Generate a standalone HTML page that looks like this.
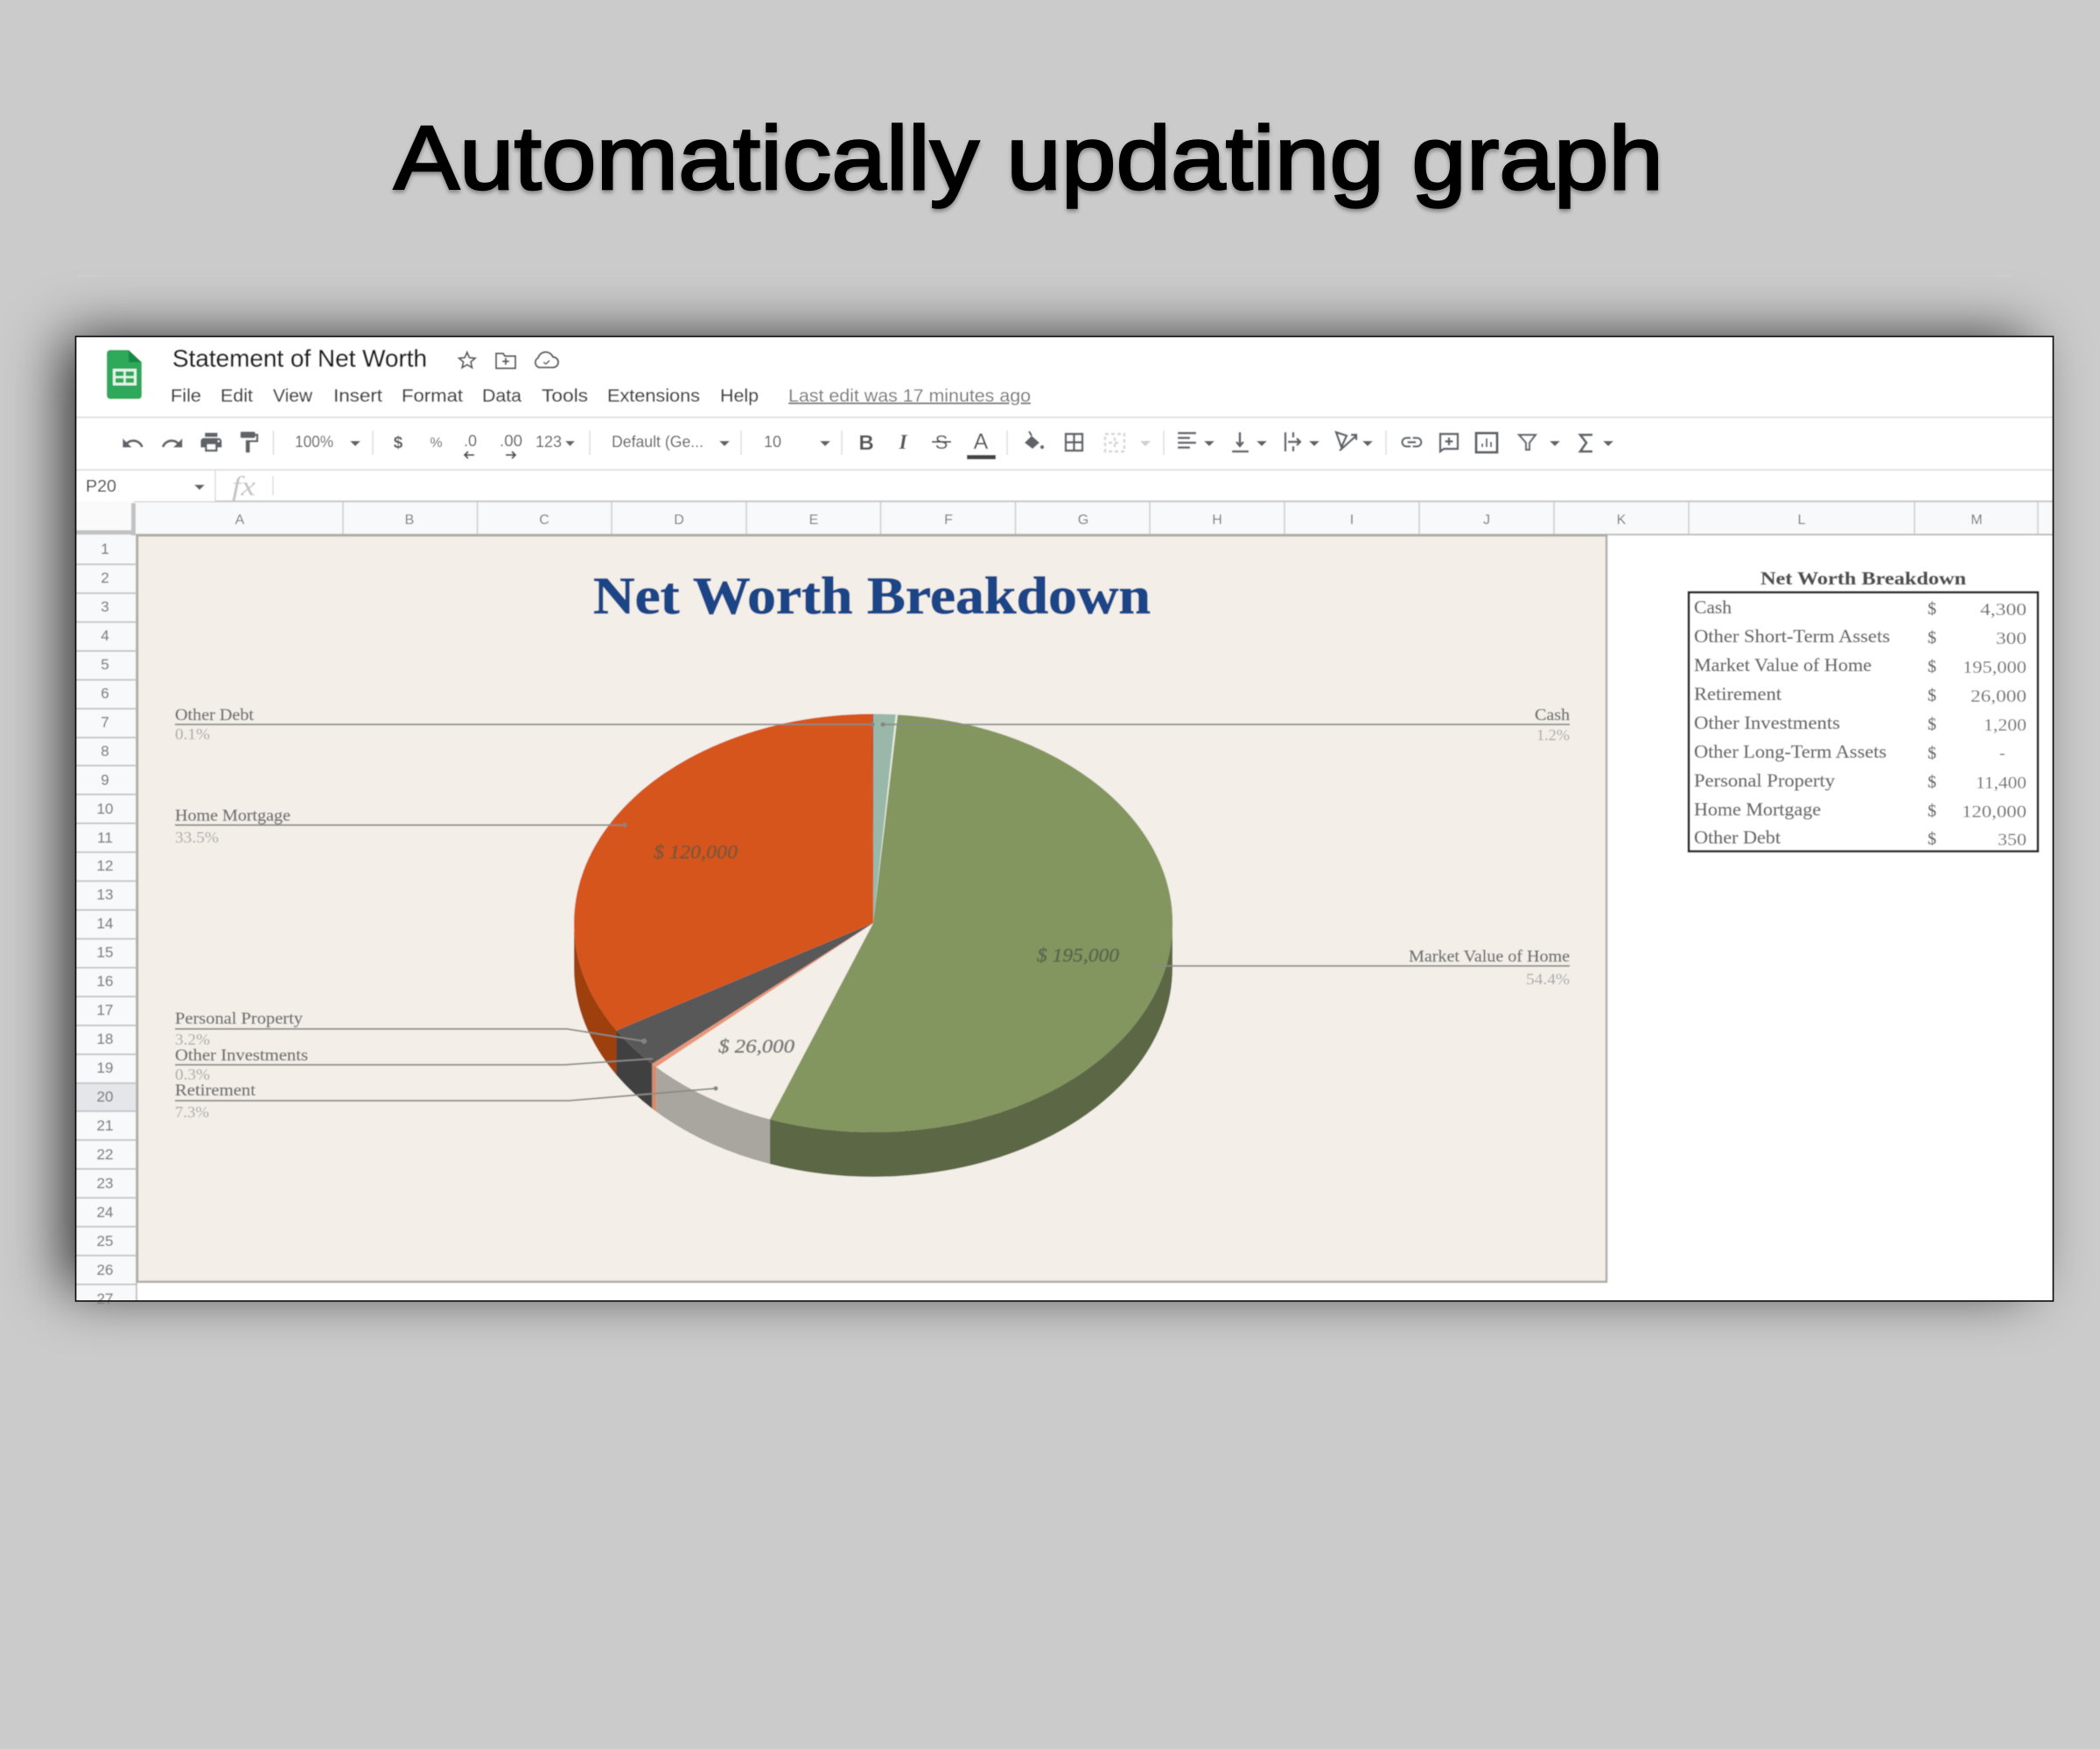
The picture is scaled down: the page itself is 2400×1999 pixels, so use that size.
<!DOCTYPE html>
<html lang="en">
<head>
<meta charset="utf-8">
<title>Automatically updating graph</title>
<style>
html,body{margin:0;padding:0;background:#cbcbcb;}
body{width:2400px;height:1999px;position:relative;overflow:hidden;}
#faint{position:absolute;left:86px;top:315px;width:2215px;height:1px;background:#d0d0d0;}
#shadow{position:absolute;left:74px;top:386px;width:2242px;height:1087px;background:rgba(0,0,0,.78);filter:blur(33px);}
svg{position:absolute;left:0;top:0;}
.sans{font-family:"Liberation Sans",sans-serif;}
.serif{font-family:"Liberation Serif",serif;}
</style>
</head>
<body>
<div id="faint"></div>
<div id="shadow"></div>
<svg width="2400" height="1999" viewBox="0 0 2400 1999" xmlns="http://www.w3.org/2000/svg">
<defs>
<filter id="ts" x="-5%" y="-20%" width="110%" height="150%"><feDropShadow dx="0" dy="3" stdDeviation="2.500" flood-color="#000" flood-opacity=".35"/></filter>
<filter id="soft" x="0" y="0" width="100%" height="100%"><feGaussianBlur stdDeviation=".65"/></filter>
</defs>

<text class="sans" x="450" y="216" font-size="103" fill="#050505" stroke="#050505" stroke-width="2.400" textLength="1451" lengthAdjust="spacingAndGlyphs" filter="url(#ts)">Automatically updating graph</text>

<g filter="url(#soft)">
<rect x="87" y="385" width="2259" height="1102" fill="#fff"/>

<!-- chrome lines -->
<rect x="87" y="476" width="2259" height="2" fill="#e2e2e2"/>
<rect x="87" y="536" width="2259" height="2" fill="#e2e2e2"/>
<rect x="87" y="573" width="2259" height="39" fill="#f8f9fa"/>
<rect x="87" y="572" width="2259" height="2" fill="#c6c6c6"/>
<rect x="87" y="538" width="159" height="35" fill="#fff"/>
<rect x="87" y="573" width="66" height="34" fill="#fafafa"/>

<!-- sheets logo -->
<path d="M122 404a4 4 0 0 1 4-4h21l15 14v38a4 4 0 0 1-4 4h-32a4 4 0 0 1-4-4z" fill="#2fa85a"/>
<path d="M147 400l15 14h-15z" fill="#178a43"/>
<path d="M130.500 423h24v16h-24z" fill="none" stroke="#e6f5ea" stroke-width="3"/>
<path d="M142.500 423v16M130.500 431h24" stroke="#e6f5ea" stroke-width="2.500"/>

<!-- doc title -->
<text class="sans" x="197" y="419" font-size="28" fill="#1d1d1d" stroke="#1d1d1d" stroke-width=".3" textLength="291" lengthAdjust="spacingAndGlyphs">Statement of Net Worth</text>
<path transform="translate(520,398) scale(1.15)" fill="#555" d="M22 9.24l-7.19-.62L12 2 9.19 8.630 2 9.240l5.460 4.730L5.820 21 12 17.270 18.180 21l-1.630-7.030L22 9.240zM12 15.400l-3.760 2.270 1-4.280-3.320-2.880 4.380-.38L12 6.100l1.710 4.040 4.380.38-3.320 2.880 1 4.280L12 15.400z"/>
<path d="M567 404h8l2 3h12v14h-22z" fill="none" stroke="#555" stroke-width="2"/>
<path d="M578 409v8M574 413h8" stroke="#555" stroke-width="2"/>
<path d="M619 420h-3a6 6 0 0 1-1-11 9 9 0 0 1 17-1 6 6 0 0 1 0 12h-13z" fill="none" stroke="#555" stroke-width="2"/>
<path d="M621 414l3 2 4-4" fill="none" stroke="#555" stroke-width="1.600"/>

<!-- menu -->
<g class="sans" font-size="20" fill="#3f3f3f" stroke="#3f3f3f" stroke-width=".2">
<text x="195" y="459" textLength="35" lengthAdjust="spacingAndGlyphs">File</text>
<text x="252" y="459" textLength="37" lengthAdjust="spacingAndGlyphs">Edit</text>
<text x="312" y="459" textLength="45" lengthAdjust="spacingAndGlyphs">View</text>
<text x="381" y="459" textLength="56" lengthAdjust="spacingAndGlyphs">Insert</text>
<text x="459" y="459" textLength="70" lengthAdjust="spacingAndGlyphs">Format</text>
<text x="551" y="459" textLength="45" lengthAdjust="spacingAndGlyphs">Data</text>
<text x="619" y="459" textLength="53" lengthAdjust="spacingAndGlyphs">Tools</text>
<text x="694" y="459" textLength="106" lengthAdjust="spacingAndGlyphs">Extensions</text>
<text x="823" y="459" textLength="44" lengthAdjust="spacingAndGlyphs">Help</text>
</g>
<text class="sans" x="901" y="459" font-size="20" fill="#777" text-decoration="underline" textLength="277" lengthAdjust="spacingAndGlyphs">Last edit was 17 minutes ago</text>

<!-- toolbar separators -->
<path d="M312.500 492v28M426 492v28M674 492v28M847 492v28M962 492v28M1151 492v28M1330 492v28M1584 492v28" stroke="#ddd" stroke-width="1.500"/>

<!-- toolbar icons -->
<g fill="#5f6368">
<path transform="translate(138,493) scale(1.150)" d="M12.500 8c-2.650 0-5.050.99-6.900 2.600L2 7v9h9l-3.620-3.620c1.390-1.160 3.160-1.880 5.120-1.880 3.540 0 6.550 2.310 7.600 5.500l2.370-.78C21.080 11.030 17.150 8 12.500 8z"/>
<path transform="translate(183,493) scale(1.150)" d="M18.400 10.600C16.550 8.990 14.150 8 11.500 8c-4.650 0-8.580 3.030-9.960 7.220L3.900 16c1.050-3.190 4.050-5.500 7.600-5.500 1.950 0 3.730.72 5.120 1.880L13 16h9V7l-3.600 3.600z"/>
<path transform="translate(227,491) scale(1.200)" d="M19 8H5c-1.660 0-3 1.340-3 3v6h4v4h12v-4h4v-6c0-1.660-1.340-3-3-3zm-3 11H8v-5h8v5zm3-7c-.55 0-1-.45-1-1s.45-1 1-1 1 .45 1 1-.45 1-1 1zm-1-9H6v4h12V3z"/>
<path transform="translate(270,491) scale(1.200)" d="M18 4V3c0-.55-.45-1-1-1H5c-.55 0-1 .45-1 1v4c0 .55.45 1 1 1h12c.55 0 1-.45 1-1V6h1v4H9v11c0 .55.45 1 1 1h2c.55 0 1-.45 1-1v-9h8V4h-3z"/>
<!-- dropdown triangles -->
<path d="M400 504h12l-6 6zM646 504h11l-5.500 6zM822 504h12l-6 6zM937 504h12l-6 6zM1376 504h12l-6 6zM1436 504h12l-6 6zM1496 504h12l-6 6zM1557 504h12l-6 6zM1771 504h12l-6 6zM1832 504h12l-6 6zM222 554h12l-6 6z"/>
<path d="M1303 504h12l-6 6z" fill="#cfcfcf"/>
<!-- fill -->
<path d="M1179 498l9 8-8 7-9-7z" />
<path d="M1176 493l3 5" stroke="#5f6368" stroke-width="2.200"/>
<circle cx="1191" cy="511" r="2.200"/>
<!-- text colour bar -->
<rect x="1105" y="520" width="33" height="5" fill="#444"/>
<!-- link -->
<path transform="translate(1599,491) scale(1.200)" d="M3.900 12c0-1.710 1.390-3.100 3.100-3.100h4V7H7c-2.760 0-5 2.240-5 5s2.240 5 5 5h4v-1.900H7c-1.710 0-3.100-1.390-3.100-3.100zM8 13h8v-2H8v2zm9-6h-4v1.900h4c1.710 0 3.100 1.390 3.100 3.100s-1.390 3.100-3.100 3.100h-4V17h4c2.760 0 5-2.240 5-5s-2.240-5-5-5z"/>
</g>
<g fill="none" stroke="#5f6368" stroke-width="2.400">
<path d="M1218 496h19v19h-19zM1227.500 496v19M1218 505.500h19"/>
<path d="M1263 496h22v20h-22zM1274 500v12M1267 506h14" stroke="#d6d6d6" stroke-dasharray="4 3"/>
<path d="M1346 495h21M1346 500.500h14M1346 506h21M1346 511.500h14" stroke-width="2.600"/>
<path d="M1417 494v15" stroke-width="2.600"/>
<path d="M1413 505l4 5 4-5M1408 516h19" stroke-width="2.400"/>
<path d="M1469 494v22M1478 494v6M1478 510v6M1472 505h13M1482 501l4 4-4 4"/>
<path d="M1527 494l12 4-6 13zM1531 515l19-17M1544 497h6v6"/>
<path d="M1646 496h20v17h-16l-4 3zM1656 500v9M1651.500 504.500h9"/>
<path d="M1687 495h24v22h-24z" stroke-width="3"/>
<path d="M1694 511v-4M1699 511v-10M1704 511v-6" stroke-width="2"/>
<path d="M1736 497h19l-7 9v8h-4v-8z" stroke-width="2.200"/>
<path d="M1820 497h-14l7 9-7 10h14" stroke-width="2.800"/>
</g>

<!-- toolbar text -->
<g class="sans" font-size="18" fill="#555">
<text x="337" y="511" textLength="44" lengthAdjust="spacingAndGlyphs">100%</text>
<text x="455" y="512" text-anchor="middle" font-size="19" font-weight="bold">$</text>
<text x="498.500" y="511" text-anchor="middle" font-size="16">%</text>
<text x="530" y="510" textLength="15" lengthAdjust="spacingAndGlyphs">.0</text>
<text x="571" y="510" textLength="26" lengthAdjust="spacingAndGlyphs">.00</text>
<text x="612" y="511" textLength="30" lengthAdjust="spacingAndGlyphs">123</text>
<text x="699" y="511" textLength="105" lengthAdjust="spacingAndGlyphs">Default (Ge...</text>
<text x="873" y="511" textLength="20" lengthAdjust="spacingAndGlyphs">10</text>
<text x="990" y="514" text-anchor="middle" font-size="24" font-weight="bold">B</text>
<text x="1032" y="513" text-anchor="middle" font-size="24" font-style="italic" font-weight="bold" font-family="Liberation Serif,serif">I</text>
<text x="1076" y="513" text-anchor="middle" font-size="22">S</text>
<text x="1121" y="513" text-anchor="middle" font-size="25">A</text>
</g>
<path d="M1065 505h22" stroke="#555" stroke-width="2"/>
<path d="M531 520h11M535 516l-4 4 4 4M578 520h11M585 516l4 4-4 4" fill="none" stroke="#555" stroke-width="2"/>

<!-- name box & fx -->
<text class="sans" x="98" y="562" font-size="19" fill="#333" textLength="35" lengthAdjust="spacingAndGlyphs">P20</text>
<path d="M246 537v36" stroke="#ddd" stroke-width="1.500"/>
<text class="serif" x="265" y="566" font-size="32" font-style="italic" fill="#c4c4c4" textLength="27" lengthAdjust="spacingAndGlyphs">fx</text>
<path d="M312 544v22" stroke="#ddd" stroke-width="1.500"/>

<!-- column header -->
<path d="M392 574v37M545.500 574v37M699 574v37M853 574v37M1006.500 574v37M1160.500 574v37M1314 574v37M1468 574v37M1622 574v37M1776 574v37M1930 574v37M2188 574v37M2329 574v37" stroke="#ccc" stroke-width="1.500"/>
<g class="sans" font-size="16" fill="#777" text-anchor="middle">
<text x="274" y="599">A</text><text x="468" y="599">B</text><text x="622" y="599">C</text><text x="776" y="599">D</text><text x="930" y="599">E</text><text x="1084" y="599">F</text><text x="1238" y="599">G</text><text x="1391" y="599">H</text><text x="1545" y="599">I</text><text x="1699" y="599">J</text><text x="1853" y="599">K</text><text x="2059" y="599">L</text><text x="2259" y="599">M</text>
</g>
<rect x="150" y="575" width="5" height="37" fill="#c2c2c2"/>
<rect x="87" y="606" width="68" height="5" fill="#c2c2c2"/>
<rect x="155" y="610" width="2191" height="2" fill="#bdbdbd"/>

<!-- row gutter -->
<rect x="87" y="612" width="69" height="875" fill="#f7f9fb"/>
<rect x="87" y="1237" width="69" height="33" fill="#e4e6ea"/>
<path d="M87 645h69M87 678h69M87 711h69M87 744h69M87 777h69M87 810h69M87 843h69M87 875h69M87 908h69M87 941h69M87 974h69M87 1007h69M87 1040h69M87 1073h69M87 1106h69M87 1139h69M87 1172h69M87 1205h69M87 1238h69M87 1270h69M87 1303h69M87 1336h69M87 1369h69M87 1402h69M87 1435h69M87 1468h69" stroke="#c8c8c8" stroke-width="2"/>
<rect x="155" y="612" width="2" height="875" fill="#c4c4c4"/>
<g class="sans" font-size="17" fill="#808080" stroke="#808080" stroke-width=".2" text-anchor="middle">
<text x="120" y="633">1</text><text x="120" y="666">2</text><text x="120" y="699">3</text><text x="120" y="732">4</text><text x="120" y="765">5</text><text x="120" y="798">6</text><text x="120" y="831">7</text><text x="120" y="864">8</text><text x="120" y="897">9</text><text x="120" y="930">10</text><text x="120" y="963">11</text><text x="120" y="995">12</text><text x="120" y="1028">13</text><text x="120" y="1061">14</text><text x="120" y="1094">15</text><text x="120" y="1127">16</text><text x="120" y="1160">17</text><text x="120" y="1193">18</text><text x="120" y="1226">19</text><text x="120" y="1259">20</text><text x="120" y="1292">21</text><text x="120" y="1325">22</text><text x="120" y="1358">23</text><text x="120" y="1391">24</text><text x="120" y="1424">25</text><text x="120" y="1457">26</text><text x="120" y="1490">27</text>
</g>

<!-- chart -->
<rect x="157" y="612" width="1679" height="853" fill="#f3eee8"/>
<path d="M157 612h1679v853H157z" fill="none" stroke="#aeaca6" stroke-width="2.400"/>
<text class="serif" x="678" y="701" font-size="60" font-weight="bold" fill="#1c4587" stroke="#1c4587" stroke-width=".8" textLength="637" lengthAdjust="spacingAndGlyphs">Net Worth Breakdown</text>

<!-- pie walls -->
<path d="M1340 1055A342 239 0 0 1 879.900 1279.300V1330.300A342 239 0 0 0 1340 1106Z" fill="#5b6845"/>
<path d="M879.900 1279.300A342 239 0 0 1 749.900 1219.500V1270.500A342 239 0 0 0 879.900 1330.300Z" fill="#a9a69f"/>
<path d="M749.900 1219.500A342 239 0 0 1 745.200 1216V1267A342 239 0 0 0 749.900 1270.500Z" fill="#d88a6c"/>
<path d="M745.200 1216A342 239 0 0 1 704.500 1177.700V1228.700A342 239 0 0 0 745.200 1267Z" fill="#3f3f3f"/>
<path d="M704.500 1177.700A342 239 0 0 1 656 1055V1106A342 239 0 0 0 704.500 1228.700Z" fill="#9e400f"/>
<!-- pie top -->
<path d="M998 1055L1023.600 816.700A342 239 0 1 1 879.900 1279.300Z" fill="#84965f"/>
<path d="M998 1055L879.900 1279.300A342 239 0 0 1 749.900 1219.500Z" fill="#f3eee8"/>
<path d="M998 1055L749.900 1219.500A342 239 0 0 1 745.200 1216Z" fill="#e9977a"/>
<path d="M998 1055L745.200 1216A342 239 0 0 1 704.500 1177.700Z" fill="#595959"/>
<path d="M998 1055L704.500 1177.700A342 239 0 0 1 996.200 816Z" fill="#d5541a"/>
<path d="M998 1055L996.200 816H998Z" fill="#c23a1c"/>
<path d="M998 1055V816A342 239 0 0 1 1023.600 816.700Z" fill="#9ab8a9"/>
<path d="M998 1055L1023.600 816.700L1026 817Z" fill="#e7ece0"/>

<!-- leader lines -->
<g fill="none" stroke="#8a8a86" stroke-width="1.800">
<path d="M200 828H997"/>
<path d="M1009 828H1794"/>
<path d="M200 943H713"/>
<path d="M1794 1104H1318"/>
<path d="M200 1176H648L736 1190"/>
<path d="M200 1217H645L746 1210"/>
<path d="M200 1258H650L818 1244"/>
</g>
<g fill="#85857f">
<circle cx="997" cy="828" r="2.500"/><circle cx="1009" cy="828" r="2.500"/><circle cx="714" cy="943" r="2.500"/><circle cx="736" cy="1190" r="3"/><circle cx="818" cy="1244" r="2.500"/>
</g>

<!-- data labels -->
<g class="serif" font-style="italic" font-size="22" stroke-width=".5">
<text x="747" y="981" fill="#7e5538" stroke="#7e5538" textLength="96" lengthAdjust="spacingAndGlyphs">$ 120,000</text>
<text x="1185" y="1099" fill="#59684f" stroke="#59684f" textLength="94" lengthAdjust="spacingAndGlyphs">$ 195,000</text>
<text x="821" y="1203" fill="#7a7a78" stroke="#7a7a78" textLength="87" lengthAdjust="spacingAndGlyphs">$ 26,000</text>
</g>
<g class="serif" font-size="19" fill="#707070" stroke="#707070" stroke-width=".25">
<text x="200" y="823" textLength="90" lengthAdjust="spacingAndGlyphs">Other Debt</text>
<text x="200" y="938" textLength="132" lengthAdjust="spacingAndGlyphs">Home Mortgage</text>
<text x="200" y="1170" textLength="146" lengthAdjust="spacingAndGlyphs">Personal Property</text>
<text x="200" y="1212" textLength="152" lengthAdjust="spacingAndGlyphs">Other Investments</text>
<text x="200" y="1252" textLength="92" lengthAdjust="spacingAndGlyphs">Retirement</text>
<text x="1754" y="823" textLength="40" lengthAdjust="spacingAndGlyphs">Cash</text>
<text x="1610" y="1099" textLength="184" lengthAdjust="spacingAndGlyphs">Market Value of Home</text>
</g>
<g class="serif" font-size="18" fill="#aaa">
<text x="200" y="845" textLength="40" lengthAdjust="spacingAndGlyphs">0.1%</text>
<text x="200" y="963" textLength="50" lengthAdjust="spacingAndGlyphs">33.5%</text>
<text x="200" y="1194" textLength="40" lengthAdjust="spacingAndGlyphs">3.2%</text>
<text x="200" y="1234" textLength="40" lengthAdjust="spacingAndGlyphs">0.3%</text>
<text x="200" y="1277" textLength="39" lengthAdjust="spacingAndGlyphs">7.3%</text>
<text x="1756" y="846" textLength="38" lengthAdjust="spacingAndGlyphs">1.2%</text>
<text x="1744" y="1125" textLength="50" lengthAdjust="spacingAndGlyphs">54.4%</text>
</g>

<!-- right table -->
<text class="serif" x="2012" y="668" font-size="21" font-weight="bold" fill="#4f4f4f" stroke="#4f4f4f" stroke-width=".3" textLength="235" lengthAdjust="spacingAndGlyphs">Net Worth Breakdown</text>
<rect x="1930" y="677" width="399" height="296" fill="#fff" stroke="#1c1c1c" stroke-width="2.600"/>
<g class="serif" font-size="21" fill="#666" stroke="#666" stroke-width=".25">
<text x="1936" y="701" textLength="43" lengthAdjust="spacingAndGlyphs">Cash</text>
<text x="1936" y="734" textLength="224" lengthAdjust="spacingAndGlyphs">Other Short-Term Assets</text>
<text x="1936" y="767" textLength="203" lengthAdjust="spacingAndGlyphs">Market Value of Home</text>
<text x="1936" y="800" textLength="100" lengthAdjust="spacingAndGlyphs">Retirement</text>
<text x="1936" y="833" textLength="167" lengthAdjust="spacingAndGlyphs">Other Investments</text>
<text x="1936" y="866" textLength="220" lengthAdjust="spacingAndGlyphs">Other Long-Term Assets</text>
<text x="1936" y="899" textLength="161" lengthAdjust="spacingAndGlyphs">Personal Property</text>
<text x="1936" y="932" textLength="145" lengthAdjust="spacingAndGlyphs">Home Mortgage</text>
<text x="1936" y="964" textLength="99" lengthAdjust="spacingAndGlyphs">Other Debt</text>
</g>
<g class="serif" font-size="20" fill="#666" stroke="#666" stroke-width=".25" text-anchor="middle">
<text x="2208" y="702">$</text><text x="2208" y="735">$</text><text x="2208" y="768">$</text><text x="2208" y="801">$</text><text x="2208" y="834">$</text><text x="2208" y="867">$</text><text x="2208" y="900">$</text><text x="2208" y="933">$</text><text x="2208" y="965">$</text>
</g>
<g class="serif" font-size="20" fill="#6e6e6e">
<text x="2263" y="703" textLength="53" lengthAdjust="spacingAndGlyphs">4,300</text>
<text x="2281" y="736" textLength="35" lengthAdjust="spacingAndGlyphs">300</text>
<text x="2243" y="769" textLength="73" lengthAdjust="spacingAndGlyphs">195,000</text>
<text x="2252" y="802" textLength="64" lengthAdjust="spacingAndGlyphs">26,000</text>
<text x="2267" y="835" textLength="49" lengthAdjust="spacingAndGlyphs">1,200</text>
<text x="2285" y="867">-</text>
<text x="2258" y="901" textLength="58" lengthAdjust="spacingAndGlyphs">11,400</text>
<text x="2242" y="934" textLength="74" lengthAdjust="spacingAndGlyphs">120,000</text>
<text x="2283" y="966" textLength="33" lengthAdjust="spacingAndGlyphs">350</text>
</g>
</g>

<!-- window outline -->
<rect x="86.500" y="384.500" width="2260" height="1102.500" fill="none" stroke="#0a0a0a" stroke-width="1.600"/>
</svg>
</body>
</html>
